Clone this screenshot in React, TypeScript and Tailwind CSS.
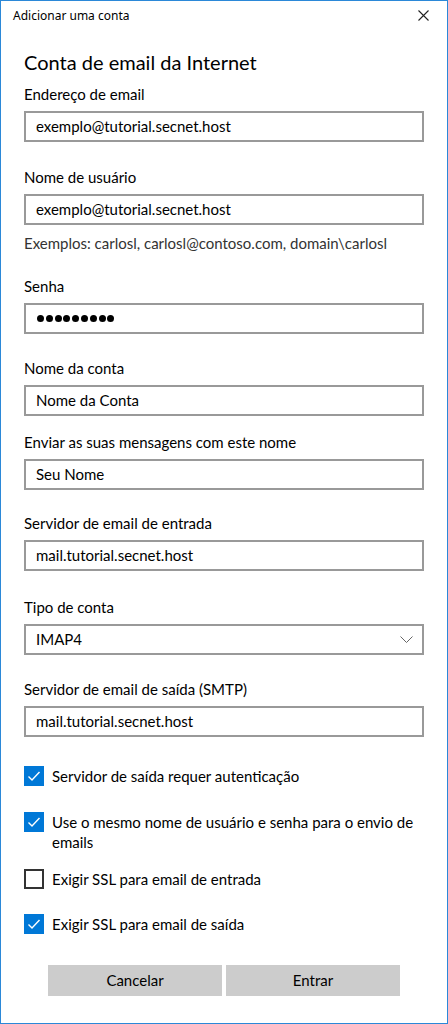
import React from "react";

const font = {
  fontFamily: '"Segoe UI", Lato, "Noto Sans", sans-serif',
};

function TextBox({ value }: { value: string }) {
  return (
    <div className="h-[31px] w-[400px] border-2 border-[#999999] bg-white flex items-center pl-[10px] text-[15px] text-black">
      {value}
    </div>
  );
}

function Check({ checked }: { checked: boolean }) {
  if (!checked) {
    return <div className="w-[20px] h-[20px] shrink-0 border-2 border-[#333333] bg-white" />;
  }
  return (
    <div className="w-[20px] h-[20px] shrink-0 bg-[#0078d7] flex items-center justify-center">
      <svg width="14" height="14" viewBox="0 0 14 14" fill="none">
        <polyline points="1.5,7.5 5,11 12.5,3" stroke="white" strokeWidth="1.4" />
      </svg>
    </div>
  );
}

export default function App() {
  return (
    <div
      className="w-[448px] h-[1024px] border border-[#2b88d8] bg-white flex flex-col text-black"
      style={font}
    >
      {/* title bar */}
      <div className="h-[29px] flex items-center justify-between pl-[12px] pr-[18px]">
        <span className="text-[12px] font-['Noto_Sans',sans-serif]">Adicionar uma conta</span>
        <svg width="11" height="11" viewBox="0 0 11 11">
          <path d="M0.5 0.5 L10.5 10.5 M10.5 0.5 L0.5 10.5" stroke="#222" strokeWidth="1.1" />
        </svg>
      </div>

      <div className="flex flex-col px-[23px]">
        <h1 className="mt-[18px] text-[20px] leading-[28px] font-normal">
          Conta de email da Internet
        </h1>

        <p className="mt-[8px] text-[15px] leading-[20px] mb-[7px]">Endereço de email</p>
        <TextBox value="exemplo@tutorial.secnet.host" />

        <p className="mt-[25px] text-[15px] leading-[20px] mb-[7px]">Nome de usuário</p>
        <TextBox value="exemplo@tutorial.secnet.host" />
        <p className="mt-[8px] text-[15px] leading-[20px] text-[#333]">
          Exemplos: carlosl, carlosl@contoso.com, domain\carlosl
        </p>

        <p className="mt-[23px] text-[15px] leading-[20px] mb-[7px]">Senha</p>
        <div className="h-[31px] w-[400px] border-2 border-[#999999] bg-white flex items-center pl-[11px] gap-[1.8px]">
          {Array.from({ length: 9 }).map((_, i) => (
            <div key={i} className="w-[7px] h-[7px] rounded-full bg-black" />
          ))}
        </div>

        <p className="mt-[24px] text-[15px] leading-[20px] mb-[7px]">Nome da conta</p>
        <TextBox value="Nome da Conta" />

        <p className="mt-[16px] text-[15px] leading-[20px] mb-[7px]">
          Enviar as suas mensagens com este nome
        </p>
        <TextBox value="Seu Nome" />

        <p className="mt-[23px] text-[15px] leading-[20px] mb-[7px]">
          Servidor de email de entrada
        </p>
        <TextBox value="mail.tutorial.secnet.host" />

        <p className="mt-[26px] text-[15px] leading-[20px] mb-[7px]">Tipo de conta</p>
        <div className="h-[31px] w-[400px] border-2 border-[#999999] bg-white flex items-center justify-between pl-[10px] pr-[9px] text-[15px]">
          <span>IMAP4</span>
          <svg width="13" height="8" viewBox="0 0 13 8" fill="none">
            <polyline points="0.5,0.5 6.5,6.5 12.5,0.5" stroke="#666" strokeWidth="1" />
          </svg>
        </div>

        <p className="mt-[24px] text-[15px] leading-[20px] mb-[7px]">
          Servidor de email de saída (SMTP)
        </p>
        <TextBox value="mail.tutorial.secnet.host" />

        <div className="mt-[29px] flex items-start gap-[8px] text-[15px] leading-[20px]">
          <Check checked />
          <span>Servidor de saída requer autenticação</span>
        </div>
        <div className="mt-[26px] flex items-start gap-[8px] text-[15px] leading-[20px]">
          <Check checked />
          <span>
            Use o mesmo nome de usuário e senha para o envio de
            <br />
            emails
          </span>
        </div>
        <div className="mt-[17px] flex items-start gap-[8px] text-[15px] leading-[20px]">
          <Check checked={false} />
          <span>Exigir SSL para email de entrada</span>
        </div>
        <div className="mt-[25px] flex items-start gap-[8px] text-[15px] leading-[20px]">
          <Check checked />
          <span>Exigir SSL para email de saída</span>
        </div>

        <div className="mt-[31px] flex justify-center gap-[4px]">
          <button
            type="button"
            className="w-[174px] h-[31px] bg-[#cccccc] text-[15px] text-black"
          >
            Cancelar
          </button>
          <button
            type="button"
            className="w-[174px] h-[31px] bg-[#cccccc] text-[15px] text-black"
          >
            Entrar
          </button>
        </div>
      </div>
    </div>
  );
}
